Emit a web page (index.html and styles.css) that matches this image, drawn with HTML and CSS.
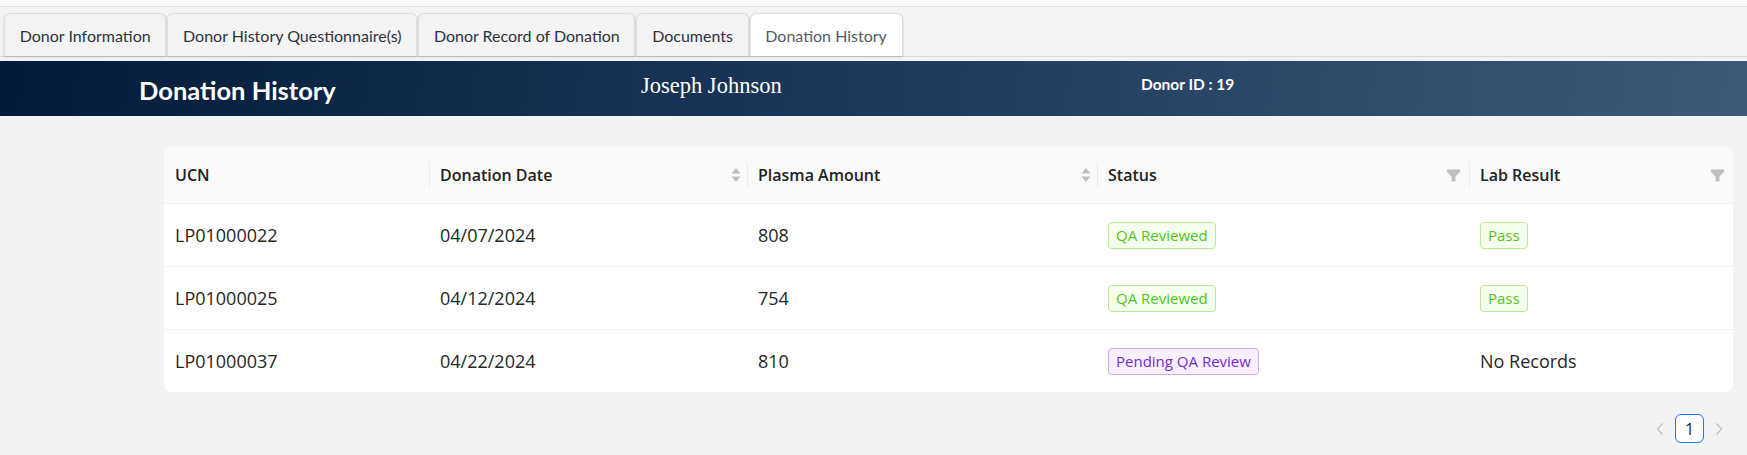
FILE: index.html
```html
<!DOCTYPE html>
<html>
<head>
<meta charset="utf-8">
<link rel="stylesheet" href="styles.css">
</head>
<body>
<div class="topbar"></div>
<div class="tabs">
  <div class="tab">Donor Information</div>
  <div class="tab">Donor History Questionnaire(s)</div>
  <div class="tab">Donor Record of Donation</div>
  <div class="tab">Documents</div>
  <div class="tab active">Donation History</div>
</div>
<div class="banner">
  <div class="b-title">Donation History</div>
  <div class="b-name">Joseph Johnson</div>
  <div class="b-id">Donor ID : 19</div>
</div>
<div class="main">
  <div class="card">
    <div class="row head">
      <div class="cell">UCN</div>
      <div class="cell sep">Donation Date
        <svg class="sorter" width="10" height="16" viewBox="0 0 10 16"><path d="M5 1 L9.5 6.5 H0.5 Z" fill="#bfbfbf"/><path d="M5 15 L9.5 9.5 H0.5 Z" fill="#bfbfbf"/></svg>
      </div>
      <div class="cell sep">Plasma Amount
        <svg class="sorter" width="10" height="16" viewBox="0 0 10 16"><path d="M5 1 L9.5 6.5 H0.5 Z" fill="#bfbfbf"/><path d="M5 15 L9.5 9.5 H0.5 Z" fill="#bfbfbf"/></svg>
      </div>
      <div class="cell sep">Status
        <svg class="filter" width="13" height="13" viewBox="0 0 13 13"><path d="M0 0.5 H13 V3 L8.5 7.5 V12.5 H4.5 V7.5 L0 3 Z" fill="#bfbfbf"/></svg>
      </div>
      <div class="cell sep">Lab Result
        <svg class="filter" width="13" height="13" viewBox="0 0 13 13"><path d="M0 0.5 H13 V3 L8.5 7.5 V12.5 H4.5 V7.5 L0 3 Z" fill="#bfbfbf"/></svg>
      </div>
    </div>
    <div class="row">
      <div class="cell">LP01000022</div>
      <div class="cell">04/07/2024</div>
      <div class="cell">808</div>
      <div class="cell"><span class="tag green">QA Reviewed</span></div>
      <div class="cell"><span class="tag green">Pass</span></div>
    </div>
    <div class="row">
      <div class="cell">LP01000025</div>
      <div class="cell">04/12/2024</div>
      <div class="cell">754</div>
      <div class="cell"><span class="tag green">QA Reviewed</span></div>
      <div class="cell"><span class="tag green">Pass</span></div>
    </div>
    <div class="row last">
      <div class="cell">LP01000037</div>
      <div class="cell">04/22/2024</div>
      <div class="cell">810</div>
      <div class="cell"><span class="tag purple">Pending QA Review</span></div>
      <div class="cell">No Records</div>
    </div>
  </div>
  <div class="pager">
    <svg class="arrow" width="10" height="14" viewBox="0 0 10 14"><path d="M7.5 1.5 L2.5 7 L7.5 12.5" fill="none" stroke="#c4c4c4" stroke-width="1.4"/></svg>
    <div class="page">1</div>
    <svg class="arrow" width="10" height="14" viewBox="0 0 10 14"><path d="M2.5 1.5 L7.5 7 L2.5 12.5" fill="none" stroke="#c4c4c4" stroke-width="1.4"/></svg>
  </div>
</div>
</body>
</html>
```

FILE: styles.css
```css
html, body {
  margin: 0;
  padding: 0;
}
body {
  background: #f3f3f3;
  font-family: "Open Sans", "Noto Sans", sans-serif;
  width: 1747px;
  height: 455px;
  overflow: hidden;
}
.topbar {
  height: 6px;
  background: #f8f9fa;
  border-bottom: 1px solid #e2e2e2;
}
.tabs {
  display: flex;
  padding: 6px 0 0 4px;
  background: #f4f4f4;
  border-bottom: 1px solid #d8d8d8;
}
.tab {
  height: 42px;
  display: flex;
  align-items: center;
  padding: 0 14.7px;
  font-family: Lato, "Open Sans", sans-serif;
  font-size: 16px;
  color: #2f3340;
  background: #f4f4f4;
  border: 1px solid #dddddd;
  border-bottom: none;
  border-radius: 6px 6px 0 0;
  box-shadow: 0 1px 2px rgba(0,0,0,0.18);
  margin-right: 1px;
}
.tab.active {
  background: #ffffff;
  color: #555b66;
}
.banner {
  margin-top: 4px;
  height: 55px;
  background: linear-gradient(100deg, #041a38 0%, #1a3658 45%, #3e5a78 100%);
  display: flex;
  align-items: center;
  padding-left: 139px;
  color: #ffffff;
}
.b-title {
  width: 502px;
  font-family: Lato, sans-serif;
  font-weight: 700;
  font-size: 25.5px;
  padding-top: 2px;
}
.b-name {
  width: 500px;
  font-family: "Liberation Serif", serif;
  font-size: 22.5px;
  margin-bottom: 6px;
}
.b-id {
  font-family: Lato, sans-serif;
  font-weight: 700;
  font-size: 15.5px;
  margin-bottom: 10px;
}
.main {
  padding: 31px 14px 0 164px;
}
.card {
  background: #ffffff;
  border-radius: 8px;
  overflow: hidden;
}
.row {
  display: grid;
  grid-template-columns: 265px 318px 350px 372px 264px;
  height: 62px;
  border-bottom: 1px solid #f0f0f0;
  font-size: 18px;
  color: #262626;
}
.row.last {
  border-bottom: none;
}
.row.head {
  height: 56px;
  background: #fafafa;
  font-weight: 600;
  font-size: 16px;
  color: #222222;
}
.cell {
  display: flex;
  align-items: center;
  padding: 0 11px;
  position: relative;
}
.head .cell {
  justify-content: space-between;
}
.head .sep::before {
  content: "";
  position: absolute;
  left: 0;
  top: 50%;
  transform: translateY(-50%);
  width: 1px;
  height: 25px;
  background: #ececec;
}
.sorter {
  margin-right: -5px;
}
.filter {
  margin-right: -2px;
}
.tag {
  display: inline-block;
  font-size: 15px;
  line-height: 25px;
  padding: 0 7px;
  border-radius: 4px;
  border: 1px solid;
}
.tag.green {
  background: #f6ffed;
  border-color: #b7eb8f;
  color: #52c41a;
}
.tag.purple {
  background: #f9f0ff;
  border-color: #d3adf7;
  color: #722ed1;
}
.pager {
  display: flex;
  justify-content: flex-end;
  align-items: center;
  gap: 10px;
  margin-top: 22px;
  padding-right: 9px;
}
.page {
  width: 27px;
  height: 27px;
  border: 1px solid #1677ff;
  border-radius: 6px;
  display: flex;
  align-items: center;
  justify-content: center;
  font-size: 16px;
  color: #1f1f1f;
  background: #ffffff;
}
```
